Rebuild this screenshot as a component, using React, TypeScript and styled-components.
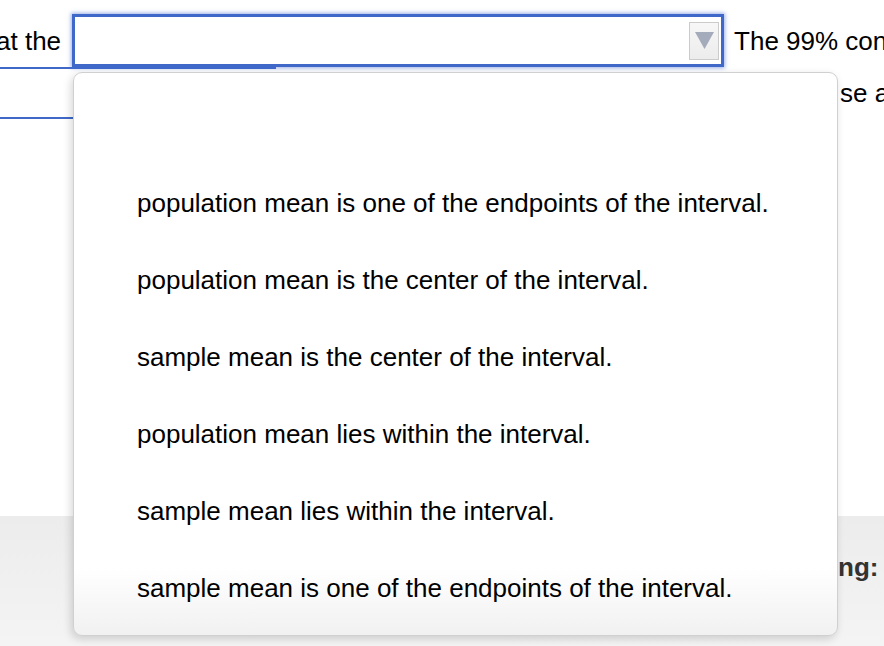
import React from 'react';
import styled, { createGlobalStyle } from 'styled-components';

const GlobalStyle = createGlobalStyle`
  html, body {
    margin: 0;
    padding: 0;
    width: 884px;
    height: 646px;
    overflow: hidden;
    background: #ffffff;
  }
  body {
    font-family: "Liberation Sans", Arial, Helvetica, sans-serif;
    color: #000;
  }
`;

const Page = styled.div`
  width: 884px;
  height: 646px;
  display: flex;
  flex-direction: column;
  overflow: hidden;
`;

const Question = styled.section`
  position: relative;
  height: 516px;
  padding-top: 14px;
  box-sizing: border-box;
  background: #fff;
`;

const Row = styled.div`
  display: flex;
  align-items: center;
  height: 53px;
  white-space: nowrap;
  font-size: 26px;
`;

const Words = styled.span<{ $shift?: number }>`
  margin-left: ${p => p.$shift ?? 0}px;
  line-height: 1;
  flex-shrink: 0;
`;

const Rule = styled.div<{ $width: number }>`
  width: ${p => p.$width}px;
  height: 2px;
  background: #3f68c9;
`;

const SecondRow = styled.div`
  display: flex;
  align-items: center;
  height: 48px;
  padding-left: 840px;
  font-size: 26px;
  white-space: nowrap;
`;

const Select = styled.div`
  position: relative;
  z-index: 2;
  flex-shrink: 0;
  margin-left: 11px;
  margin-right: 10px;
  width: 652px;
  height: 53px;
  box-sizing: border-box;
  border: 3px solid #3f68c9;
  box-shadow: 0 0 4px 1px rgba(70, 110, 210, 0.55);
  background: #fff;
  display: flex;
  justify-content: flex-end;
  align-items: center;
  padding-right: 2px;
`;

const ArrowButton = styled.div`
  width: 30px;
  height: 38px;
  box-sizing: border-box;
  border: 1px solid #cbcbcb;
  background: linear-gradient(#f7f7f7, #ececec);
  display: flex;
  justify-content: center;
  align-items: center;
`;

const Menu = styled.ul`
  position: absolute;
  z-index: 3;
  left: 73px;
  top: 72px;
  width: 765px;
  height: 564px;
  box-sizing: border-box;
  margin: 0;
  padding: 15px 0 0 63px;
  list-style: none;
  border: 1px solid #d0d0d0;
  border-radius: 9px;
  background: linear-gradient(#ffffff 0%, #ffffff 88%, #f1f1f1 100%);
  box-shadow: -2px 3px 8px rgba(0, 0, 0, 0.16);
`;

const Option = styled.li`
  height: 77px;
  display: flex;
  align-items: center;
  font-size: 26px;
  color: #000;
  white-space: nowrap;
`;

const Footer = styled.footer`
  flex: 1;
  background: linear-gradient(#ececec, #f4f4f4);
  display: flex;
  padding: 36px 0 0 838px;
  box-sizing: border-box;
`;

const FooterLabel = styled.span`
  font-size: 26px;
  font-weight: bold;
  color: #333;
  white-space: nowrap;
`;

const options = [
  '',
  'population mean is one of the endpoints of the interval.',
  'population mean is the center of the interval.',
  'sample mean is the center of the interval.',
  'population mean lies within the interval.',
  'sample mean lies within the interval.',
  'sample mean is one of the endpoints of the interval.',
];

export default function App() {
  return (
    <Page>
      <GlobalStyle />
      <Question>
        <Row>
          <Words $shift={-4}>at the</Words>
          <Select>
            <ArrowButton>
              <svg width="19" height="17" viewBox="0 0 19 17">
                <polygon points="0,0 19,0 9.5,17" fill="#a4abba" />
              </svg>
            </ArrowButton>
          </Select>
          <Words>The 99% confidence</Words>
        </Row>
        <Rule $width={276} />
        <SecondRow>
          <Words>se a</Words>
        </SecondRow>
        <Rule $width={90} />
        <Menu>
          {options.map((o, i) => (
            <Option key={i}>{o}</Option>
          ))}
        </Menu>
      </Question>
      <Footer>
        <FooterLabel>ng: (</FooterLabel>
      </Footer>
    </Page>
  );
}
